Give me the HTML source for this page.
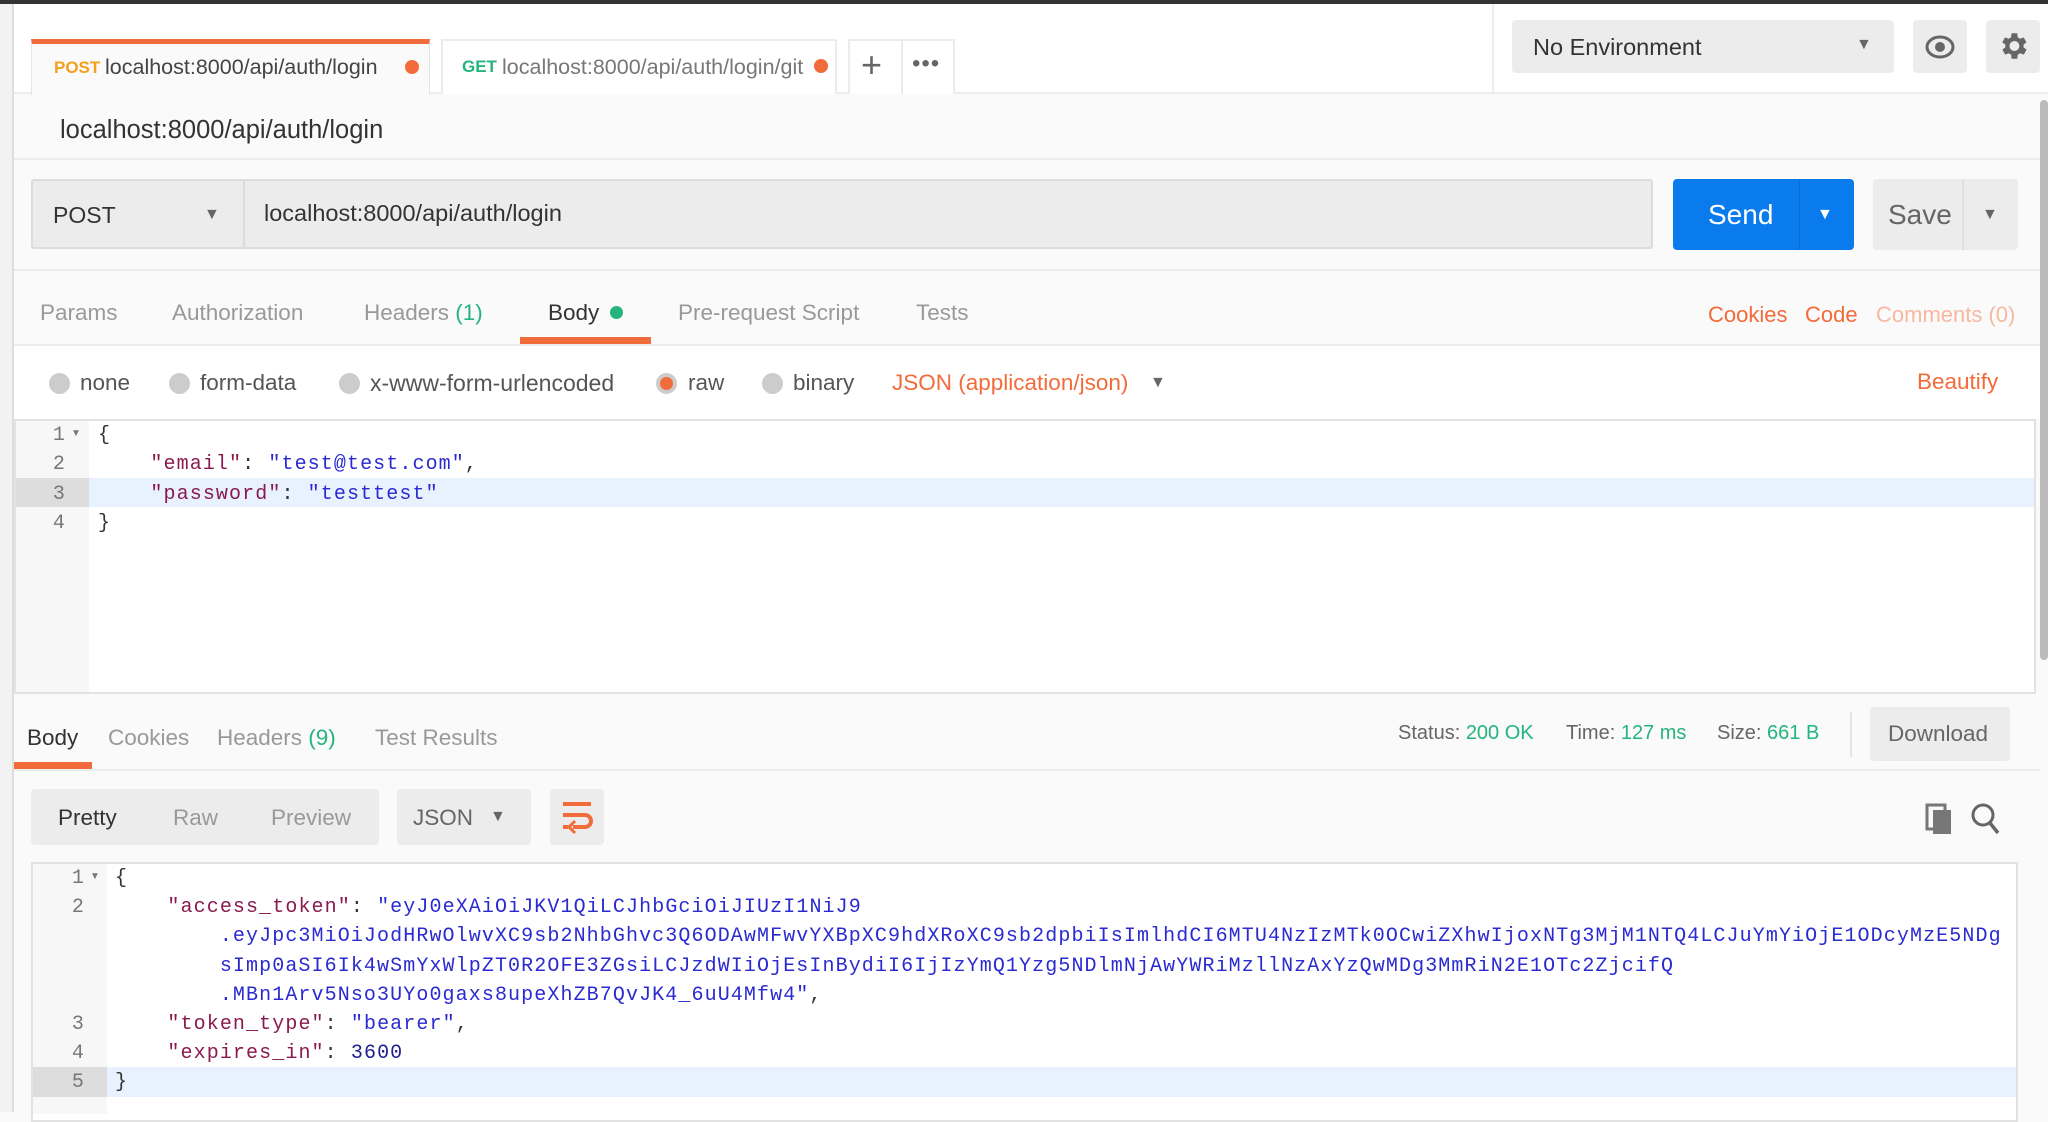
<!DOCTYPE html>
<html><head><meta charset="utf-8"><style>
*{box-sizing:border-box;margin:0;padding:0}
body{width:2048px;height:1112px;overflow:hidden;background:#fafafa;font-family:"Liberation Sans",sans-serif;position:relative;color:#505050}
.a{position:absolute}
.t{white-space:nowrap}
.mono{font-family:"Liberation Mono",monospace;font-size:20px;letter-spacing:1.1px;white-space:pre;color:#333}
.k{color:#8a1a4e}.s{color:#2a2ad0}.n{color:#202090}
.org{color:#f26b3a}
.grn{color:#24b47e}
</style></head><body>
<div class="a" style="left:0;top:0;width:2048px;height:4px;background:#333"></div>
<div class="a" style="left:0;top:4px;width:2048px;height:90px;background:#fff;border-bottom:2px solid #ececec"></div>
<div class="a" style="left:0;top:4px;width:14px;height:1108px;background:#f2f2f2;border-right:2px solid #ddd"></div>
<div class="a" style="left:31px;top:39px;width:399px;height:56px;background:#fafafa;border-top:5px solid #f26b3a;border-left:1px solid #e6e6e6;border-right:1px solid #e6e6e6"></div>
<div class="a t" style="left:54px;top:58px;font-size:17px;color:#f4a01c;font-weight:bold">POST</div>
<div class="a t" style="left:105px;top:55px;font-size:21.5px;color:#444">localhost:8000/api/auth/login</div>
<div class="a" style="left:405px;top:60px;width:14px;height:14px;border-radius:50%;background:#f26b3a"></div>
<div class="a" style="left:441px;top:39px;width:396px;height:55px;background:#fff;border:2px solid #ececec;border-bottom:none"></div>
<div class="a t" style="left:462px;top:57px;font-size:17px;color:#24b47e;font-weight:bold">GET</div>
<div class="a t" style="left:502px;top:55px;font-size:21.5px;color:#777">localhost:8000/api/auth/login/git</div>
<div class="a" style="left:814px;top:59px;width:14px;height:14px;border-radius:50%;background:#f26b3a"></div>
<div class="a" style="left:848px;top:39px;width:107px;height:55px;border:2px solid #ececec;border-bottom:none;background:#fff"></div>
<div class="a" style="left:901px;top:39px;width:2px;height:55px;background:#ececec"></div>
<div class="a t" style="left:861px;top:44px;font-size:36px;color:#666;font-weight:300">+</div>
<div class="a t" style="left:912px;top:50px;font-size:24px;color:#666;letter-spacing:1px">•••</div>
<div class="a" style="left:1492px;top:4px;width:2px;height:90px;background:#ececec"></div>
<div class="a" style="left:1512px;top:20px;width:382px;height:53px;background:#ececec;border-radius:4px"></div>
<div class="a t" style="left:1533px;top:34px;font-size:23.5px;color:#333">No Environment</div>
<div class="a t" style="left:1856px;top:36px;font-size:16px;color:#666">▼</div>
<div class="a" style="left:1913px;top:20px;width:54px;height:53px;background:#ececec;border-radius:4px"></div>
<svg class="a" style="left:1924px;top:33px" width="32" height="28" viewBox="0 0 32 28"><ellipse cx="16" cy="14" rx="13" ry="10" fill="none" stroke="#666" stroke-width="3"/><circle cx="16" cy="14" r="5" fill="#666"/></svg>
<div class="a" style="left:1986px;top:20px;width:54px;height:53px;background:#ececec;border-radius:4px"></div>
<svg class="a" style="left:1996px;top:29px" width="34" height="34" viewBox="0 0 24 24"><path fill="#666" d="M19.4 13a7.5 7.5 0 000-2l2.1-1.6-2-3.5-2.5 1a7 7 0 00-1.7-1L15 3h-4l-.4 2.9a7 7 0 00-1.7 1l-2.5-1-2 3.5L6.6 11a7.5 7.5 0 000 2l-2.1 1.6 2 3.5 2.5-1a7 7 0 001.7 1L11 21h4l.4-2.9a7 7 0 001.7-1l2.5 1 2-3.5zM13 15.5A3.5 3.5 0 1113 8.5a3.5 3.5 0 010 7z"/></svg>
<div class="a" style="left:2040px;top:100px;width:8px;height:560px;background:#bbb;border-radius:4px"></div>
<div class="a t" style="left:60px;top:116px;font-size:25.5px;color:#333">localhost:8000/api/auth/login</div>
<div class="a" style="left:14px;top:158px;width:2026px;height:2px;background:#ececec"></div>
<div class="a" style="left:31px;top:179px;width:1622px;height:70px;background:#ececec;border:2px solid #dcdcdc;border-radius:3px"></div>
<div class="a" style="left:243px;top:181px;width:2px;height:66px;background:#dcdcdc"></div>
<div class="a t" style="left:53px;top:202px;font-size:23px;color:#333">POST</div>
<div class="a t" style="left:204px;top:206px;font-size:16px;color:#666">▼</div>
<div class="a t" style="left:264px;top:200px;font-size:23.5px;color:#333">localhost:8000/api/auth/login</div>
<div class="a" style="left:1673px;top:179px;width:181px;height:71px;background:#097bed;border-radius:4px"></div>
<div class="a" style="left:1799px;top:179px;width:1px;height:71px;background:#0a6cd0"></div>
<div class="a t" style="left:1708px;top:199px;font-size:28px;color:#fff">Send</div>
<div class="a t" style="left:1817px;top:206px;font-size:16px;color:#fff">▼</div>
<div class="a" style="left:1873px;top:179px;width:145px;height:71px;background:#ececec;border-radius:4px"></div>
<div class="a" style="left:1962px;top:179px;width:2px;height:71px;background:#e0e0e0"></div>
<div class="a t" style="left:1888px;top:199px;font-size:28px;color:#666">Save</div>
<div class="a t" style="left:1982px;top:206px;font-size:16px;color:#666">▼</div>
<div class="a" style="left:14px;top:269px;width:2026px;height:2px;background:#ececec"></div>
<div class="a t" style="left:40px;top:300px;font-size:22.5px;color:#999">Params</div>
<div class="a t" style="left:172px;top:300px;font-size:22.5px;color:#999">Authorization</div>
<div class="a t" style="left:364px;top:300px;font-size:22.5px;color:#999">Headers <span class="grn">(1)</span></div>
<div class="a t" style="left:548px;top:300px;font-size:22.5px;color:#333">Body</div>
<div class="a" style="left:610px;top:306px;width:13px;height:13px;border-radius:50%;background:#24b47e"></div>
<div class="a t" style="left:678px;top:300px;font-size:22.5px;color:#999">Pre-request Script</div>
<div class="a t" style="left:916px;top:300px;font-size:22.5px;color:#999">Tests</div>
<div class="a t org" style="left:1708px;top:302px;font-size:22px">Cookies</div>
<div class="a t org" style="left:1805px;top:302px;font-size:22px">Code</div>
<div class="a t" style="left:1876px;top:302px;font-size:22px;color:#f8b8a0">Comments (0)</div>
<div class="a" style="left:520px;top:337px;width:131px;height:7px;background:#f26b3a"></div>
<div class="a" style="left:14px;top:344px;width:2026px;height:2px;background:#ececec"></div>
<div class="a" style="left:14px;top:346px;width:2026px;height:73px;background:#fff"></div>
<div class="a" style="left:49px;top:373px;width:21px;height:21px;border-radius:50%;background:#ccc"></div>
<div class="a t" style="left:80px;top:370px;font-size:22.5px;color:#555">none</div>
<div class="a" style="left:169px;top:373px;width:21px;height:21px;border-radius:50%;background:#ccc"></div>
<div class="a t" style="left:200px;top:370px;font-size:22.5px;color:#555">form-data</div>
<div class="a" style="left:339px;top:373px;width:21px;height:21px;border-radius:50%;background:#ccc"></div>
<div class="a t" style="left:370px;top:370px;font-size:23px;color:#555">x-www-form-urlencoded</div>
<div class="a" style="left:656px;top:373px;width:21px;height:21px;border-radius:50%;background:#f26b3a;border:4px solid #ccc"></div>
<div class="a t" style="left:688px;top:370px;font-size:22.5px;color:#555">raw</div>
<div class="a" style="left:762px;top:373px;width:21px;height:21px;border-radius:50%;background:#ccc"></div>
<div class="a t" style="left:793px;top:370px;font-size:22.5px;color:#555">binary</div>
<div class="a t org" style="left:892px;top:370px;font-size:22.5px">JSON (application/json)</div>
<div class="a t" style="left:1150px;top:374px;font-size:16px;color:#666">▼</div>
<div class="a t org" style="left:1917px;top:369px;font-size:22.5px">Beautify</div>
<div class="a" style="left:14px;top:419px;width:2022px;height:275px;background:#fff;border:2px solid #e2e2e2"></div>
<div class="a" style="left:16px;top:421px;width:73px;height:271px;background:#f7f7f7"></div>
<div class="a" style="left:16px;top:478px;width:2018px;height:29px;background:#e8f2fe"></div>
<div class="a" style="left:16px;top:478px;width:73px;height:29px;background:#ddd"></div>
<div class="a mono" style="left:16px;top:421px;line-height:29.3px;color:#777;width:50px;text-align:right">1
2
3
4</div>
<div class="a t" style="left:71px;top:428px;font-size:10px;color:#777">▼</div>
<div class="a mono" style="left:98px;top:421px;line-height:29.3px">{
    <span class="k">"email"</span>: <span class="s">"test@test.com"</span>,
    <span class="k">"password"</span>: <span class="s">"testtest"</span>
}</div>
<div class="a t" style="left:27px;top:725px;font-size:22.5px;color:#333">Body</div>
<div class="a t" style="left:108px;top:725px;font-size:22.5px;color:#999">Cookies</div>
<div class="a t" style="left:217px;top:725px;font-size:22.5px;color:#999">Headers <span class="grn">(9)</span></div>
<div class="a t" style="left:375px;top:725px;font-size:22.5px;color:#999">Test Results</div>
<div class="a" style="left:14px;top:762px;width:78px;height:7px;background:#f26b3a"></div>
<div class="a" style="left:14px;top:769px;width:2026px;height:2px;background:#ececec"></div>
<div class="a t" style="left:1398px;top:722px;font-size:20px;color:#666">Status: <span class="grn">200 OK</span></div>
<div class="a t" style="left:1566px;top:722px;font-size:20px;color:#666">Time: <span class="grn">127 ms</span></div>
<div class="a t" style="left:1717px;top:722px;font-size:20px;color:#666">Size: <span class="grn">661 B</span></div>
<div class="a" style="left:1850px;top:712px;width:2px;height:45px;background:#e4e4e4"></div>
<div class="a" style="left:1870px;top:707px;width:140px;height:54px;background:#ececec;border-radius:4px"></div>
<div class="a t" style="left:1888px;top:721px;font-size:22.5px;color:#666">Download</div>
<div class="a" style="left:31px;top:789px;width:348px;height:56px;background:#ececec;border-radius:4px"></div>
<div class="a t" style="left:58px;top:805px;font-size:22.5px;color:#333">Pretty</div>
<div class="a t" style="left:173px;top:805px;font-size:22.5px;color:#999">Raw</div>
<div class="a t" style="left:271px;top:805px;font-size:22.5px;color:#999">Preview</div>
<div class="a" style="left:397px;top:789px;width:134px;height:56px;background:#ececec;border-radius:4px"></div>
<div class="a t" style="left:413px;top:805px;font-size:22.5px;color:#666">JSON</div>
<div class="a t" style="left:490px;top:808px;font-size:16px;color:#666">▼</div>
<div class="a" style="left:550px;top:789px;width:54px;height:56px;background:#ececec;border-radius:4px"></div>
<svg class="a" style="left:560px;top:799px" width="34" height="36" viewBox="0 0 34 36"><path d="M3 5h28M3 16h22a6 6 0 010 12H13" fill="none" stroke="#f26b3a" stroke-width="4"/><path d="M15 22l-6 6 6 6" fill="none" stroke="#f26b3a" stroke-width="3"/><path d="M3 28h5" stroke="#f26b3a" stroke-width="4"/></svg>
<svg class="a" style="left:1925px;top:803px" width="28" height="32" viewBox="0 0 28 32"><rect x="2" y="2" width="18" height="24" fill="none" stroke="#777" stroke-width="3"/><rect x="8" y="7" width="18" height="24" fill="#777"/></svg>
<svg class="a" style="left:1970px;top:802px" width="32" height="34" viewBox="0 0 32 34"><circle cx="13" cy="13" r="10" fill="none" stroke="#666" stroke-width="3"/><path d="M20 21l8 10" stroke="#666" stroke-width="3.5"/></svg>
<div class="a" style="left:31px;top:862px;width:1987px;height:260px;background:#fff;border:2px solid #e2e2e2"></div>
<div class="a" style="left:33px;top:864px;width:74px;height:250px;background:#f7f7f7"></div>
<div class="a" style="left:33px;top:1067px;width:1983px;height:30px;background:#e8f2fe"></div>
<div class="a" style="left:33px;top:1067px;width:74px;height:30px;background:#ddd"></div>
<div class="a mono" style="left:33px;top:864px;line-height:29.2px;color:#777;width:52px;text-align:right">1
2



3
4
5</div>
<div class="a t" style="left:90px;top:871px;font-size:10px;color:#777">▼</div>
<div class="a mono" style="left:115px;top:864px;line-height:29.2px">{
    <span class="k">"access_token"</span>: <span class="s">"eyJ0eXAiOiJKV1QiLCJhbGciOiJIUzI1NiJ9</span>
<span class="s">        .eyJpc3MiOiJodHRwOlwvXC9sb2NhbGhvc3Q6ODAwMFwvYXBpXC9hdXRoXC9sb2dpbiIsImlhdCI6MTU4NzIzMTk0OCwiZXhwIjoxNTg3MjM1NTQ4LCJuYmYiOjE1ODcyMzE5NDg</span>
<span class="s">        sImp0aSI6Ik4wSmYxWlpZT0R2OFE3ZGsiLCJzdWIiOjEsInBydiI6IjIzYmQ1Yzg5NDlmNjAwYWRiMzllNzAxYzQwMDg3MmRiN2E1OTc2ZjcifQ</span>
<span class="s">        .MBn1Arv5Nso3UYo0gaxs8upeXhZB7QvJK4_6uU4Mfw4"</span>,
    <span class="k">"token_type"</span>: <span class="s">"bearer"</span>,
    <span class="k">"expires_in"</span>: <span class="n">3600</span>
}</div>
</body></html>
